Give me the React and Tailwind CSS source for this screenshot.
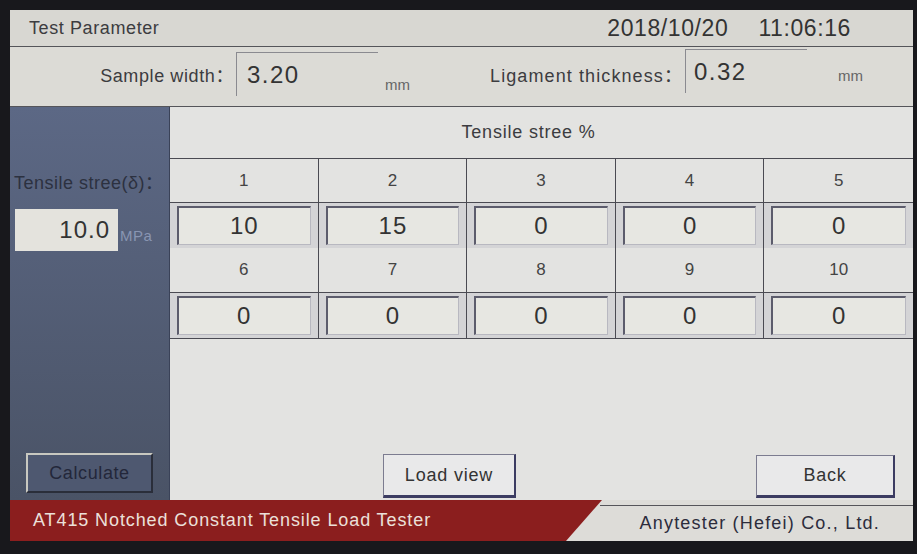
import React from "react";

const font = { fontFamily: '"Liberation Sans", Arial, "Noto Sans CJK SC", sans-serif' };

// one numbered value cell of the tensile stress grid
function ValueBox({ value }) {
  return (
    <div className="h-full px-[7px] py-[3px] bg-[#d4d4d6] border-r border-[#4a4a52] last:border-r-0">
      <div className="h-full flex items-center justify-center bg-[#e7e7e2] border-t-2 border-l-2 border-[#5c5c6c] border-b border-r border-b-[#b8b8c0] border-r-[#b8b8c0] text-[24px] tracking-[1px] text-[#333]">
        {value}
      </div>
    </div>
  );
}

function LabelCell({ n }) {
  return (
    <div className="h-full flex items-center justify-center border-r border-[#4a4a52] last:border-r-0 text-[17px] text-[#444]">
      {n}
    </div>
  );
}

function PanelButton({ children, className = "" }) {
  return (
    <button
      className={
        "flex items-center justify-center bg-[#e9e9ea] border border-[#7c7c90] border-b-[3px] border-b-[#3c3c62] border-r-[2px] border-r-[#3c3c62] text-[18px] tracking-[0.8px] text-[#333] " +
        className
      }
    >
      {children}
    </button>
  );
}

export default function App() {
  const row1 = [10, 15, 0, 0, 0];
  const row2 = [0, 0, 0, 0, 0];

  return (
    <div
      className="w-[917px] h-[554px] bg-[#18181c] pl-[10px] pt-[10px] pr-[4px] pb-[13px] overflow-hidden"
      style={font}
    >
      <div className="w-full h-full flex flex-col bg-[#dddcd8]">
        {/* header */}
        <div className="h-[37px] flex items-center bg-[#d8d7d2] border-b border-[#55555a]">
          <div className="pl-[19px] text-[18px] tracking-[0.6px] text-[#3c3c40]">Test Parameter</div>
          <div className="ml-auto pr-[62px] text-[23px] tracking-[0.6px] text-[#333] flex gap-[30px]">
            <span>2018/10/20</span>
            <span>11:06:16</span>
          </div>
        </div>

        {/* sample dimensions */}
        <div className="h-[60px] flex items-start bg-[#dcdbd6] border-b border-[#55555a]">
          <div className="w-[224px] h-full flex items-center justify-end text-[18px] tracking-[0.6px] text-[#3c3c40]">
            Sample width：
          </div>
          <div className="ml-[2px] mt-[5px] w-[142px] h-[44px] flex items-center pl-[10px] border-t border-l border-[#8a8a90] text-[24px] tracking-[1.5px] text-[#333]">
            3.20
          </div>
          <div className="ml-[7px] mt-[27px] text-[15px] text-[#666]">mm</div>
          <div className="ml-[76px] w-[197px] h-full flex items-center justify-end text-[18px] tracking-[1.1px] whitespace-nowrap text-[#3c3c40]">
            Ligament thickness：
          </div>
          <div className="ml-[2px] mt-[2px] w-[122px] h-[44px] flex items-center pl-[8px] border-t border-l border-[#8a8a90] text-[24px] tracking-[1.5px] text-[#333]">
            0.32
          </div>
          <div className="ml-[31px] mt-[18px] text-[15px] text-[#666]">mm</div>
        </div>

        {/* main */}
        <div className="h-[393px] flex">
          <div className="w-[160px] flex flex-col bg-gradient-to-b from-[#5c6885] to-[#4a5366] border-r border-[#3a4258]">
            <div className="mt-[63px] pl-[4px] text-[18px] tracking-[0.5px] whitespace-nowrap text-[#2c3140]">Tensile stree(δ)：</div>
            <div className="mt-[12px] flex items-end">
              <div className="ml-[5px] w-[103px] h-[42px] flex items-center justify-end pr-[8px] bg-[#e4e3dd] text-[24px] tracking-[1px] text-[#333]">
                10.0
              </div>
              <div className="ml-[2px] mb-[4px] text-[15px] tracking-[0.5px] text-[#8995b2]">MPa</div>
            </div>
            <div className="mt-auto mb-[7px] ml-[16px] w-[127px] h-[40px] flex items-center justify-center bg-[#4e5870] border-t-2 border-l-2 border-[#c8c8c0] border-b-2 border-r-2 border-b-[#2a2e3a] border-r-[#2a2e3a] text-[18px] tracking-[0.6px] text-[#23273a]">
              Calculate
            </div>
          </div>

          <div className="flex-1 flex flex-col bg-[#e3e3e1]">
            <div className="h-[51px] flex items-center justify-center pr-[26px] text-[18px] tracking-[0.8px] text-[#3c3c40]">
              Tensile stree %
            </div>
            <div className="border-t border-[#4a4a52] border-b">
              <div className="h-[44px] grid grid-cols-5 border-b border-[#4a4a52]">
                {[1, 2, 3, 4, 5].map((n) => (
                  <LabelCell key={n} n={n} />
                ))}
              </div>
              <div className="h-[45px] grid grid-cols-5 border-b border-[#4a4a52]">
                {row1.map((v, i) => (
                  <ValueBox key={i} value={v} />
                ))}
              </div>
              <div className="h-[45px] grid grid-cols-5 border-b border-[#4a4a52]">
                {[6, 7, 8, 9, 10].map((n) => (
                  <LabelCell key={n} n={n} />
                ))}
              </div>
              <div className="h-[45px] grid grid-cols-5">
                {row2.map((v, i) => (
                  <ValueBox key={i} value={v} />
                ))}
              </div>
            </div>
            <div className="flex-1 flex items-end pb-[2px]">
              <PanelButton className="ml-[213px] w-[133px] h-[44px]">Load view</PanelButton>
              <PanelButton className="ml-auto mr-[18px] w-[139px] h-[43px]">Back</PanelButton>
            </div>
          </div>
        </div>

        {/* footer */}
        <div className="flex-1 flex bg-[#dddcd8]">
          <div
            className="w-[592px] flex-none flex items-center pl-[23px] bg-[#8b1e1e] text-[18px] tracking-[0.9px] whitespace-nowrap text-[#ebe0da]"
            style={{ clipPath: "polygon(0 0, 100% 0, calc(100% - 36px) 100%, 0 100%)" }}
          >
            AT415 Notched Constant Tensile Load Tester
          </div>
          <div className="flex-1 -ml-[2px] mt-[5px] flex items-center justify-end pr-[33px] border-t border-[#55555a] text-[18px] tracking-[1.2px] whitespace-nowrap text-[#2c2c3c]">
            Anytester (Hefei) Co., Ltd.
          </div>
        </div>
      </div>
    </div>
  );
}
